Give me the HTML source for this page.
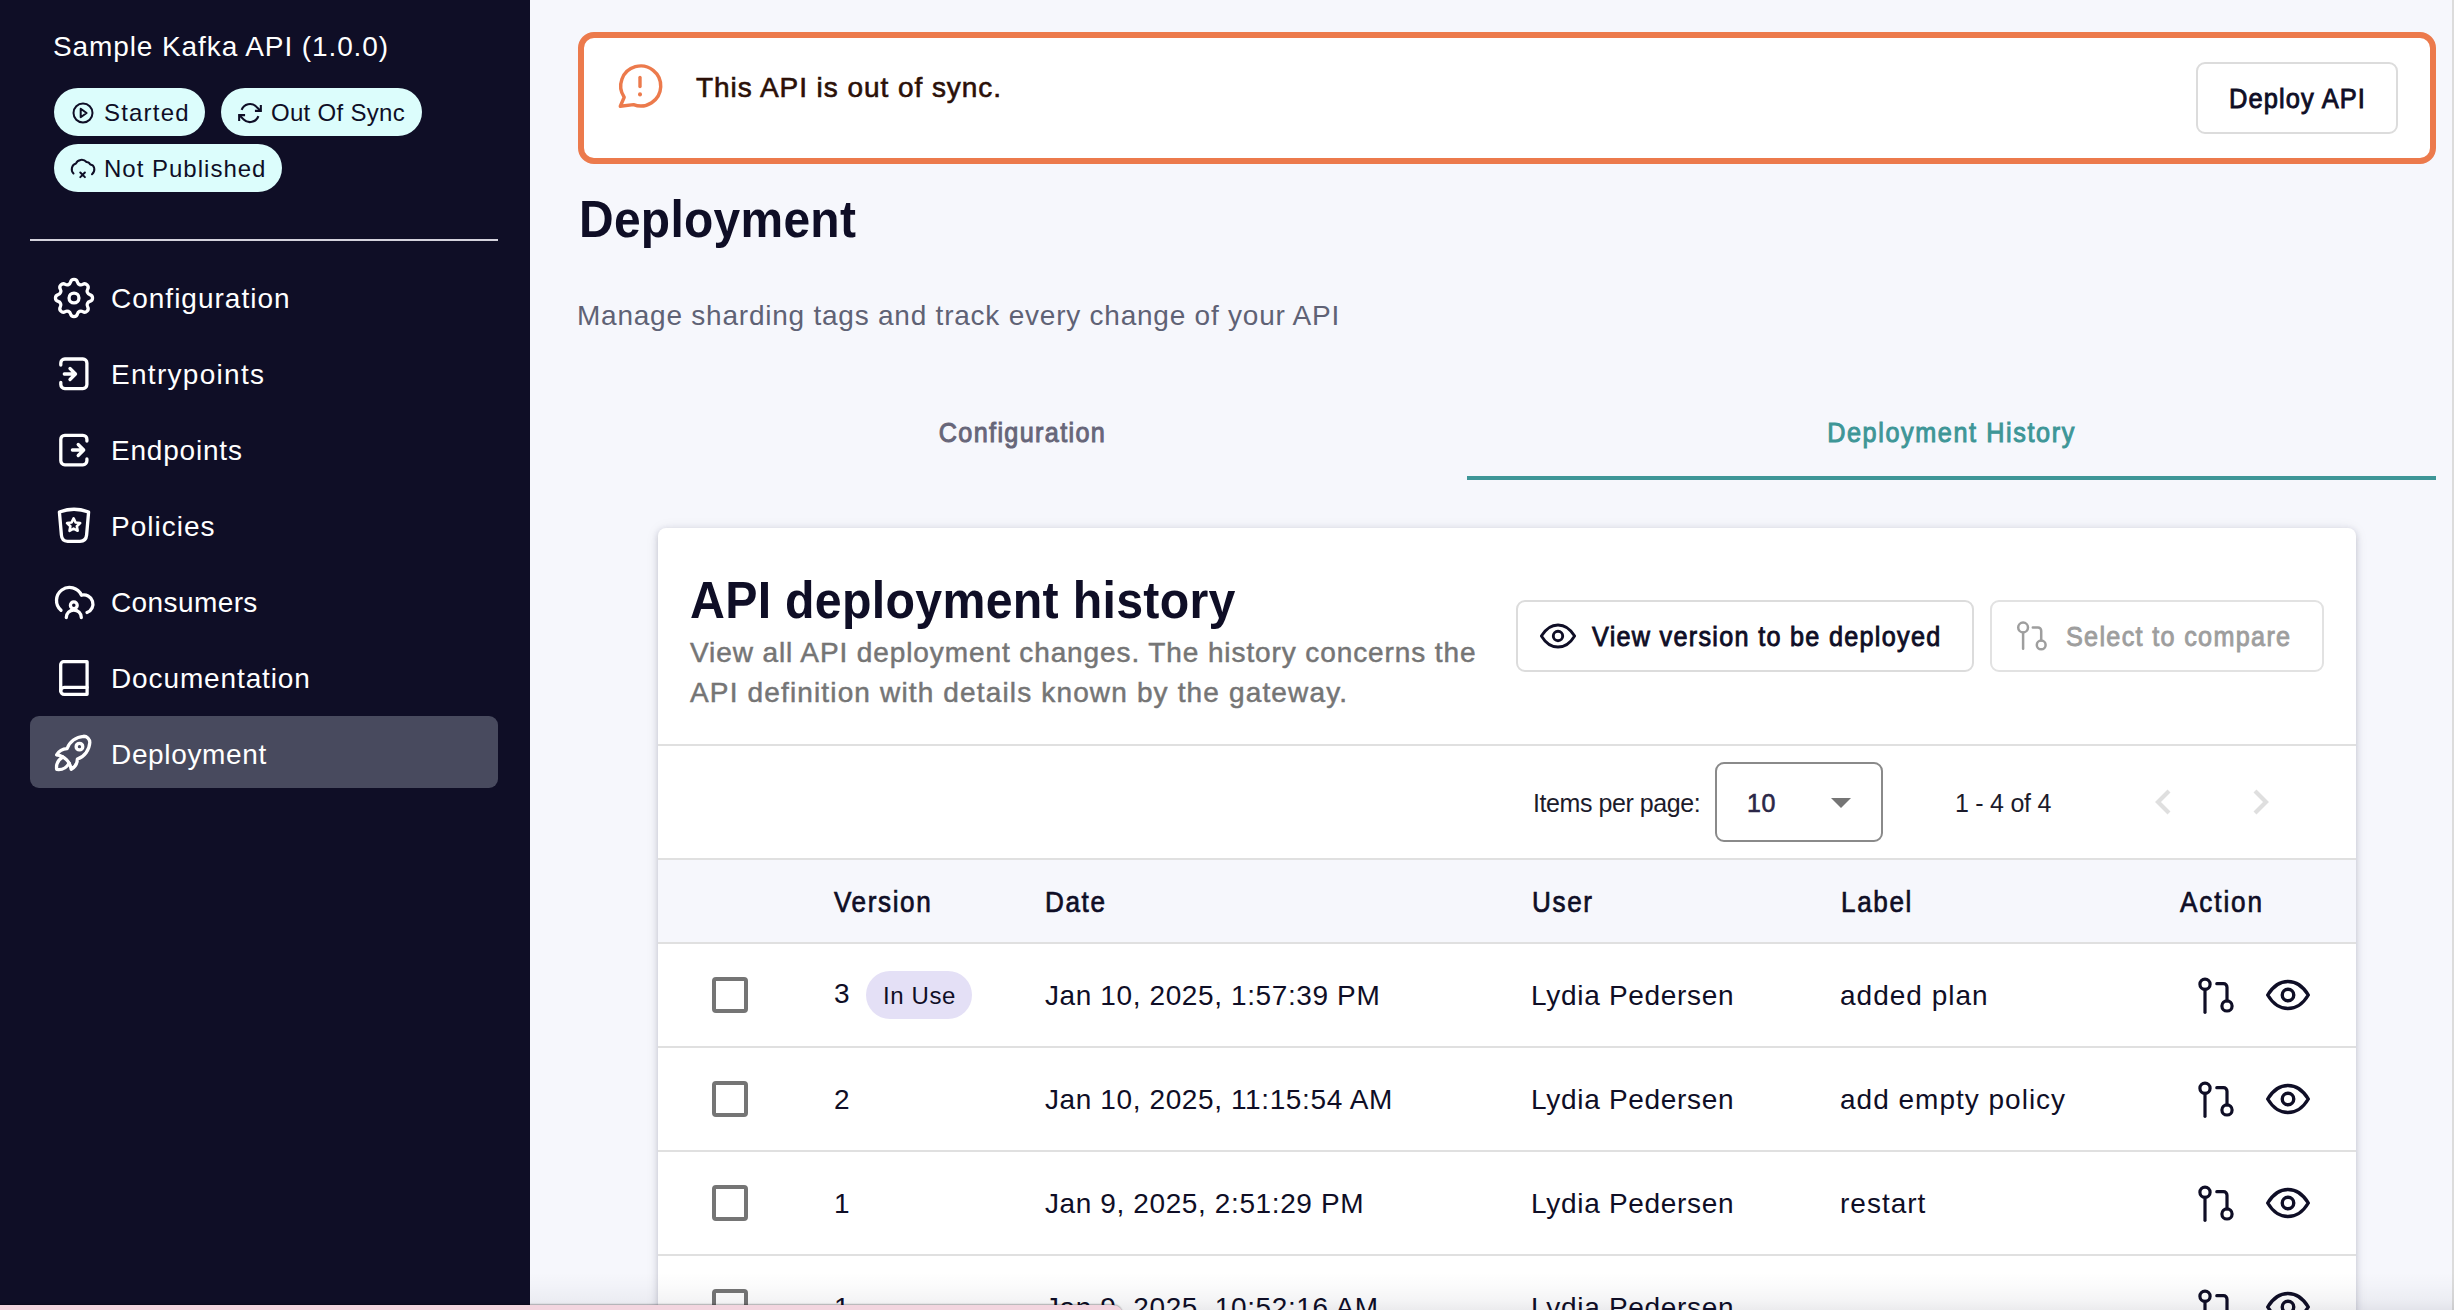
<!DOCTYPE html>
<html><head><meta charset="utf-8">
<style>
*{box-sizing:border-box;margin:0;padding:0}
html,body{width:2454px;height:1310px;overflow:hidden;background:#f6f7fc;font-family:"Liberation Sans",sans-serif;}
.abs{position:absolute}
.t{position:absolute;white-space:nowrap;line-height:1}
#side{position:absolute;left:0;top:0;width:530px;height:1310px;background:#0f0e26}
.chip{position:absolute;height:48px;border-radius:24px;background:#dcfdfc;color:#0f0e26}
.chip .t{font-size:24px;letter-spacing:0.8px;top:13px}
.nav .t{color:#fff;font-size:28px;letter-spacing:1px;margin-top:-2px}
svg{position:absolute;overflow:visible}
#main{position:absolute;left:530px;top:0;width:1924px;height:1310px;background:#f6f7fc}
</style></head>
<body>
<div id="side">
  <div class="t" style="left:53px;top:33px;font-size:28px;color:#fff;letter-spacing:0.9px">Sample Kafka API (1.0.0)</div>
  <div class="chip" style="left:54px;top:88px;width:151px">
    <svg style="left:18px;top:14px" width="22" height="22" viewBox="0 0 22 22" fill="none" stroke="#0f0e26" stroke-width="2" stroke-linejoin="round"><circle cx="11" cy="11" r="9.5"/><path d="M8.7 6.8L14.6 11L8.7 15.2Z"/></svg>
    <div class="t" style="left:50px;letter-spacing:1.2px">Started</div>
  </div>
  <div class="chip" style="left:221px;top:88px;width:201px">
    <svg style="left:17px;top:15px" width="24" height="20" viewBox="0 0 24 20.3" fill="none" stroke="#0f0e26" stroke-width="2.1" stroke-linecap="butt" stroke-linejoin="miter"><path d="M23 2v6h-6M1 18.3v-6h6"/><path d="M3.5 7A9 9 0 0 1 18.4 3.7L23 8M1 12.3l4.6 4.4A9 9 0 0 0 20.5 13.3"/></svg>
    <div class="t" style="left:50px;letter-spacing:0.3px">Out Of Sync</div>
  </div>
  <div class="chip" style="left:54px;top:144px;width:228px">
    <svg style="left:16px;top:14px" width="28" height="22" viewBox="0 0 28 22" fill="none" stroke="#0f0e26" stroke-width="2" stroke-linecap="round" stroke-linejoin="round"><path d="M3.5 15.5C0.5 12.5 1.5 6.5 6 5.5C7.5 1.5 13.5 0.5 16.5 4C18 4 19.5 5 20.3 6.5C24.5 7 26 12.5 22 16.3"/><path d="M10.3 14.5l4.6 4.6M14.9 14.5l-4.6 4.6"/></svg>
    <div class="t" style="left:50px;letter-spacing:1.0px">Not Published</div>
  </div>
  <div class="abs" style="left:30px;top:239px;width:468px;height:2px;background:#d4d2dc"></div>

  <div class="abs" style="left:30px;top:716px;width:468px;height:72px;border-radius:9px;background:#484a5e"></div>

  <div class="nav">
  <svg style="left:0;top:0" width="530" height="820" viewBox="0 0 530 820" fill="none" stroke="#fff" stroke-width="3.3" stroke-linecap="round" stroke-linejoin="round">
    <g transform="translate(74 298) scale(2.06) translate(-12 -12)" stroke-width="1.6"><path d="M10.325 4.317c.426 -1.756 2.924 -1.756 3.35 0a1.724 1.724 0 0 0 2.573 1.066c1.543 -.94 3.31 .826 2.37 2.37a1.724 1.724 0 0 0 1.065 2.572c1.756 .426 1.756 2.924 0 3.35a1.724 1.724 0 0 0 -1.066 2.573c.94 1.543 -.826 3.31 -2.37 2.37a1.724 1.724 0 0 0 -2.572 1.065c-.426 1.756 -2.924 1.756 -3.35 0a1.724 1.724 0 0 0 -2.573 -1.066c-1.543 .94 -3.31 -.826 -2.37 -2.37a1.724 1.724 0 0 0 -1.065 -2.572c-1.756 -.426 -1.756 -2.924 0 -3.35a1.724 1.724 0 0 0 1.066 -2.573c-.94 -1.543 .826 -3.31 2.37 -2.37c1 .608 2.296 .07 2.572 -1.065z"/><circle cx="12" cy="12" r="2.4"/></g>
    <path d="M60.8 365V363a4 4 0 0 1 4-4H82.9a4 4 0 0 1 4 4V384.6a4 4 0 0 1-4 4H64.8a4 4 0 0 1-4-4V382.5"/><path d="M64.3 374H75.5M70 368.5L75.5 374L70 379.5"/>
    <path d="M86.9 441V439.3a4 4 0 0 0-4-4H64.8a4 4 0 0 0-4 4V460.8a4 4 0 0 0 4 4H82.9a4 4 0 0 0 4-4V459"/><path d="M72.4 450H83.7M78.2 444.5L83.7 450L78.2 455.5"/>
    <path d="M59.4 512Q74 506.5 88.6 512L86.6 535Q86 541.3 80 541.3H67.6Q61.8 541.3 61.4 535Z"/><path d="M73.60 518.30 L75.60 522.45 L80.16 523.07 L76.83 526.25 L77.66 530.78 L73.60 528.60 L69.54 530.78 L70.37 526.25 L67.04 523.07 L71.60 522.45Z" stroke-width="2.6"/>
    <path d="M61 610.3A13 13 0 1 1 81.4 595.2A9.1 9.1 0 0 1 87 612.5"/><circle cx="73.8" cy="605.2" r="3.4"/><path d="M66.3 617.5A7.5 7.5 0 0 1 81.3 617.5"/>
    <path d="M87.1 661.7H63.7a3 3 0 0 0-3 3V690.8a3.5 3.5 0 0 0 3.5 3.5H87.1Z"/><path d="M60.7 690.8a3.5 3.5 0 0 1 3.5-3.5H87.1"/>
    <g transform="translate(48.4 728) scale(2.07)" stroke-width="1.6"><path d="M4 13a8 8 0 0 1 7 7a6 6 0 0 0 3 -5a9 9 0 0 0 6 -8a3 3 0 0 0 -3 -3a9 9 0 0 0 -8 6a6 6 0 0 0 -5 3"/><path d="M7 14a6 6 0 0 0 -3 6a6 6 0 0 0 6 -3"/><circle cx="15" cy="9" r="1.6"/></g>
  </svg>
    <div class="t" style="left:111px;top:287px">Configuration</div>

    <div class="t" style="left:111px;top:363px;letter-spacing:1.3px">Entrypoints</div>

    <div class="t" style="left:111px;top:439px;letter-spacing:0.8px">Endpoints</div>

    <div class="t" style="left:111px;top:515px">Policies</div>

    <div class="t" style="left:111px;top:591px;letter-spacing:0.4px">Consumers</div>

    <div class="t" style="left:111px;top:667px;letter-spacing:0.88px">Documentation</div>

    <div class="t" style="left:111px;top:743px;letter-spacing:0.66px">Deployment</div>
  </div>
</div>

<div id="main">
  <!-- alert -->
  <div class="abs" style="left:48px;top:32px;width:1858px;height:132px;border:6px solid #ec7a4c;border-radius:16px;background:#fff"></div>
  <svg style="left:88px;top:64px" width="44" height="44" viewBox="0 0 44 44" fill="none" stroke="#ec7a4c" stroke-width="3.4" stroke-linecap="round" stroke-linejoin="round"><path d="M6.2 33.2A20 20 0 1 1 15.5 40.6L2.3 42.2Z"/><path d="M22 13.5v9"/><path d="M22 30.2v.2" stroke-width="4"/></svg>
  <div class="t" style="left:166px;top:74px;font-size:28px;color:#2b1008;letter-spacing:0.95px;-webkit-text-stroke:0.6px #2b1008">This API is out of sync.</div>
  <div class="abs" style="left:1666px;top:62px;width:202px;height:72px;border:2px solid #dcdcdc;border-radius:9px;background:#fff"></div>
  <div class="t" style="left:1699px;top:85px;font-size:28px;color:#0f0e26;letter-spacing:1.2px;-webkit-text-stroke:0.9px #0f0e26;transform:scaleX(0.91);transform-origin:0 0">Deploy API</div>

  <div class="t" style="left:49px;top:193px;font-size:52px;font-weight:bold;color:#0f0e26;letter-spacing:0.3px;transform:scaleX(0.922);transform-origin:0 0">Deployment</div>
  <div class="t" style="left:47px;top:302px;font-size:28px;color:#5f6275;letter-spacing:0.77px">Manage sharding tags and track every change of your API</div>

  <!-- tabs -->
  <div class="t" style="left:48px;width:889px;text-align:center;top:419px;font-size:28px;color:#676679;letter-spacing:1.5px;-webkit-text-stroke:1px #676679;transform:scaleX(0.9);transform-origin:50% 0">Configuration</div>
  <div class="t" style="left:937px;width:969px;text-align:center;top:419px;font-size:28px;color:#3e9697;letter-spacing:1.78px;-webkit-text-stroke:1px #3e9697;transform:scaleX(0.9);transform-origin:50% 0">Deployment History</div>
  <div class="abs" style="left:937px;top:476px;width:969px;height:4px;background:#3e9697"></div>

  <!-- card -->
  <div class="abs" style="left:128px;top:528px;width:1698px;height:900px;background:#fff;border-radius:8px;box-shadow:0 2px 6px rgba(40,40,70,.22),0 1px 14px rgba(40,40,70,.08)"></div>
  <div class="t" style="left:160px;top:574px;font-size:52px;font-weight:bold;color:#0f0e26;letter-spacing:0.3px;transform:scaleX(0.929);transform-origin:0 0">API deployment history</div>
  <div class="t" style="left:160px;top:641px;font-size:28px;color:#757575;letter-spacing:0.9px;line-height:40px;top:633px;-webkit-text-stroke:0.5px #757575">View all API deployment changes. The history concerns the<br><span style="letter-spacing:1.15px">API definition with details known by the gateway.</span></div>

  <div class="abs" style="left:986px;top:600px;width:458px;height:72px;border:2px solid #dcdcdc;border-radius:9px"></div>
  <svg style="left:1010px;top:622px" width="36" height="28" viewBox="0 0 26 20" fill="none" stroke="#0f0e26" stroke-width="2.1" stroke-linejoin="round"><path d="M1 10C4 5 8 2 13 2s9 3 12 8c-3 5-7 8-12 8S4 15 1 10z"/><circle cx="13" cy="10" r="3.4"/></svg>
  <div class="t" style="left:1062px;top:623px;font-size:28px;color:#0f0e26;letter-spacing:1.43px;-webkit-text-stroke:0.9px #0f0e26;transform:scaleX(0.9);transform-origin:0 0">View version to be deployed</div>

  <div class="abs" style="left:1460px;top:600px;width:334px;height:72px;border:2px solid #e2e2e2;border-radius:9px"></div>
  <svg style="left:1484px;top:618px" width="36" height="36" viewBox="0 0 36 36" fill="none" stroke="#9e9e9e" stroke-width="2.5" stroke-linecap="round" stroke-linejoin="round"><circle cx="9.1" cy="9.5" r="4.9"/><path d="M9.1 14.4V30.8"/><path d="M18.8 9.5H24a3.2 3.2 0 0 1 3.2 3.2V22.5"/><circle cx="27.2" cy="26.9" r="4.4"/></svg>
  <div class="t" style="left:1536px;top:623px;font-size:28px;color:#9e9e9e;letter-spacing:1.46px;-webkit-text-stroke:0.9px #9e9e9e;transform:scaleX(0.9);transform-origin:0 0">Select to compare</div>

  <div class="abs" style="left:128px;top:744px;width:1698px;height:2px;background:#e0e0e0"></div>

  <!-- paginator -->
  <div class="t" style="left:1003px;top:791px;font-size:25px;color:#1c1b2b;letter-spacing:-0.43px">Items per page:</div>
  <div class="abs" style="left:1185px;top:762px;width:168px;height:80px;border:2px solid #8a8a8a;border-radius:9px"></div>
  <div class="t" style="left:1217px;top:791px;font-size:25px;color:#2b2748;letter-spacing:0.6px;-webkit-text-stroke:0.6px #2b2748">10</div>
  <svg style="left:1301px;top:798px" width="20" height="10" viewBox="0 0 20 10"><path d="M0 0h20L10 10z" fill="#757575"/></svg>
  <div class="t" style="left:1425px;top:791px;font-size:25px;color:#1c1b2b;letter-spacing:-0.25px">1 - 4 of 4</div>
  <svg style="left:1624px;top:789px" width="18" height="26" viewBox="0 0 18 26" fill="none" stroke="#dfdfdf" stroke-width="4.2"><path d="M15 2L4 13l11 11"/></svg>
  <svg style="left:1722px;top:789px" width="18" height="26" viewBox="0 0 18 26" fill="none" stroke="#dfdfdf" stroke-width="4.2"><path d="M3 2l11 11L3 24"/></svg>

  <div class="abs" style="left:128px;top:858px;width:1698px;height:86px;background:#f6f7fc;border-top:2px solid #e0e0e0;border-bottom:2px solid #e0e0e0"></div>
  <div class="t" style="left:304px;top:888px;font-size:29px;color:#0f0e26;letter-spacing:1.8px;-webkit-text-stroke:0.7px #0f0e26;transform:scaleX(0.9);transform-origin:0 0">Version</div>
  <div class="t" style="left:515px;top:888px;font-size:29px;color:#0f0e26;letter-spacing:1.8px;-webkit-text-stroke:0.7px #0f0e26;transform:scaleX(0.9);transform-origin:0 0">Date</div>
  <div class="t" style="left:1002px;top:888px;font-size:29px;color:#0f0e26;letter-spacing:1.8px;-webkit-text-stroke:0.7px #0f0e26;transform:scaleX(0.9);transform-origin:0 0">User</div>
  <div class="t" style="left:1311px;top:888px;font-size:29px;color:#0f0e26;letter-spacing:1.8px;-webkit-text-stroke:0.7px #0f0e26;transform:scaleX(0.9);transform-origin:0 0">Label</div>
  <div class="t" style="left:1650px;top:888px;font-size:29px;color:#0f0e26;letter-spacing:2.1px;-webkit-text-stroke:0.7px #0f0e26;transform:scaleX(0.9);transform-origin:0 0">Action</div>
  <div class="abs" style="left:128px;top:1046px;width:1698px;height:2px;background:#e0e0e0"></div>
  <div class="abs" style="left:182px;top:977px;width:36px;height:36px;border:4px solid #757575;border-radius:4px"></div>
  <div class="t" style="left:304px;top:980px;font-size:28px;color:#0f0e26;letter-spacing:0.8px">3</div>
  <div class="abs" style="left:336px;top:971px;width:106px;height:48px;border-radius:24px;background:#e4e0f6"></div>
  <div class="t" style="left:353px;top:984px;font-size:24px;color:#0f0e26;letter-spacing:0.6px">In Use</div>
  <div class="t" style="left:515px;top:982px;font-size:28px;color:#0f0e26;letter-spacing:0.61px">Jan 10, 2025, 1:57:39 PM</div>
  <div class="t" style="left:1001px;top:982px;font-size:28px;color:#0f0e26;letter-spacing:0.7px">Lydia Pedersen</div>
  <div class="t" style="left:1310px;top:982px;font-size:28px;color:#0f0e26;letter-spacing:1.0px">added plan</div>
  <svg style="left:1666px;top:974px" width="40" height="40" viewBox="0 0 40 40" fill="none" stroke="#0f0e26" stroke-width="3.2" stroke-linecap="round" stroke-linejoin="round"><circle cx="9" cy="10.3" r="5.1"/><path d="M9 15.4V38.3"/><path d="M20.8 9.7H27.5a3.5 3.5 0 0 1 3.5 3.5V26.8"/><circle cx="31" cy="31.9" r="5.1"/></svg>
  <svg style="left:1736px;top:978px" width="44" height="34" viewBox="0 0 26 20" fill="none" stroke="#0f0e26" stroke-width="2" stroke-linejoin="round"><path d="M1 10C4 5 8 2 13 2s9 3 12 8c-3 5-7 8-12 8S4 15 1 10z"/><circle cx="13" cy="10" r="3.4"/></svg>
  <div class="abs" style="left:128px;top:1150px;width:1698px;height:2px;background:#e0e0e0"></div>
  <div class="abs" style="left:182px;top:1081px;width:36px;height:36px;border:4px solid #757575;border-radius:4px"></div>
  <div class="t" style="left:304px;top:1086px;font-size:28px;color:#0f0e26;letter-spacing:0.8px">2</div>
  <div class="t" style="left:515px;top:1086px;font-size:28px;color:#0f0e26;letter-spacing:0.61px">Jan 10, 2025, 11:15:54 AM</div>
  <div class="t" style="left:1001px;top:1086px;font-size:28px;color:#0f0e26;letter-spacing:0.7px">Lydia Pedersen</div>
  <div class="t" style="left:1310px;top:1086px;font-size:28px;color:#0f0e26;letter-spacing:1.0px">add empty policy</div>
  <svg style="left:1666px;top:1078px" width="40" height="40" viewBox="0 0 40 40" fill="none" stroke="#0f0e26" stroke-width="3.2" stroke-linecap="round" stroke-linejoin="round"><circle cx="9" cy="10.3" r="5.1"/><path d="M9 15.4V38.3"/><path d="M20.8 9.7H27.5a3.5 3.5 0 0 1 3.5 3.5V26.8"/><circle cx="31" cy="31.9" r="5.1"/></svg>
  <svg style="left:1736px;top:1082px" width="44" height="34" viewBox="0 0 26 20" fill="none" stroke="#0f0e26" stroke-width="2" stroke-linejoin="round"><path d="M1 10C4 5 8 2 13 2s9 3 12 8c-3 5-7 8-12 8S4 15 1 10z"/><circle cx="13" cy="10" r="3.4"/></svg>
  <div class="abs" style="left:128px;top:1254px;width:1698px;height:2px;background:#e0e0e0"></div>
  <div class="abs" style="left:182px;top:1185px;width:36px;height:36px;border:4px solid #757575;border-radius:4px"></div>
  <div class="t" style="left:304px;top:1190px;font-size:28px;color:#0f0e26;letter-spacing:0.8px">1</div>
  <div class="t" style="left:515px;top:1190px;font-size:28px;color:#0f0e26;letter-spacing:0.61px">Jan 9, 2025, 2:51:29 PM</div>
  <div class="t" style="left:1001px;top:1190px;font-size:28px;color:#0f0e26;letter-spacing:0.7px">Lydia Pedersen</div>
  <div class="t" style="left:1310px;top:1190px;font-size:28px;color:#0f0e26;letter-spacing:1.0px">restart</div>
  <svg style="left:1666px;top:1182px" width="40" height="40" viewBox="0 0 40 40" fill="none" stroke="#0f0e26" stroke-width="3.2" stroke-linecap="round" stroke-linejoin="round"><circle cx="9" cy="10.3" r="5.1"/><path d="M9 15.4V38.3"/><path d="M20.8 9.7H27.5a3.5 3.5 0 0 1 3.5 3.5V26.8"/><circle cx="31" cy="31.9" r="5.1"/></svg>
  <svg style="left:1736px;top:1186px" width="44" height="34" viewBox="0 0 26 20" fill="none" stroke="#0f0e26" stroke-width="2" stroke-linejoin="round"><path d="M1 10C4 5 8 2 13 2s9 3 12 8c-3 5-7 8-12 8S4 15 1 10z"/><circle cx="13" cy="10" r="3.4"/></svg>
  <div class="abs" style="left:128px;top:1358px;width:1698px;height:2px;background:#e0e0e0"></div>
  <div class="abs" style="left:182px;top:1289px;width:36px;height:36px;border:4px solid #757575;border-radius:4px"></div>
  <div class="t" style="left:304px;top:1294px;font-size:28px;color:#0f0e26;letter-spacing:0.8px">1</div>
  <div class="t" style="left:515px;top:1294px;font-size:28px;color:#0f0e26;letter-spacing:0.61px">Jan 9, 2025, 10:52:16 AM</div>
  <div class="t" style="left:1001px;top:1294px;font-size:28px;color:#0f0e26;letter-spacing:0.7px">Lydia Pedersen</div>
  <div class="t" style="left:1310px;top:1294px;font-size:28px;color:#0f0e26;letter-spacing:1.0px"></div>
  <svg style="left:1666px;top:1286px" width="40" height="40" viewBox="0 0 40 40" fill="none" stroke="#0f0e26" stroke-width="3.2" stroke-linecap="round" stroke-linejoin="round"><circle cx="9" cy="10.3" r="5.1"/><path d="M9 15.4V38.3"/><path d="M20.8 9.7H27.5a3.5 3.5 0 0 1 3.5 3.5V26.8"/><circle cx="31" cy="31.9" r="5.1"/></svg>
  <svg style="left:1736px;top:1290px" width="44" height="34" viewBox="0 0 26 20" fill="none" stroke="#0f0e26" stroke-width="2" stroke-linejoin="round"><path d="M1 10C4 5 8 2 13 2s9 3 12 8c-3 5-7 8-12 8S4 15 1 10z"/><circle cx="13" cy="10" r="3.4"/></svg>

</div>
<div class="abs" style="left:2452px;top:0;width:2px;height:1310px;background:#dcdcdc"></div>
<div class="abs" style="left:530px;top:1272px;width:1924px;height:38px;background:linear-gradient(to bottom,rgba(0,0,30,0) 0%,rgba(0,0,30,.015) 35%,rgba(0,0,30,.045) 75%,rgba(0,0,30,.08) 100%)"></div>
<div class="abs" style="left:-10px;top:1305px;width:1133px;height:16px;background:#f3d5df;border-top-right-radius:10px;box-shadow:0 -1px 1.5px rgba(0,0,0,.28)"></div>

</body></html>
